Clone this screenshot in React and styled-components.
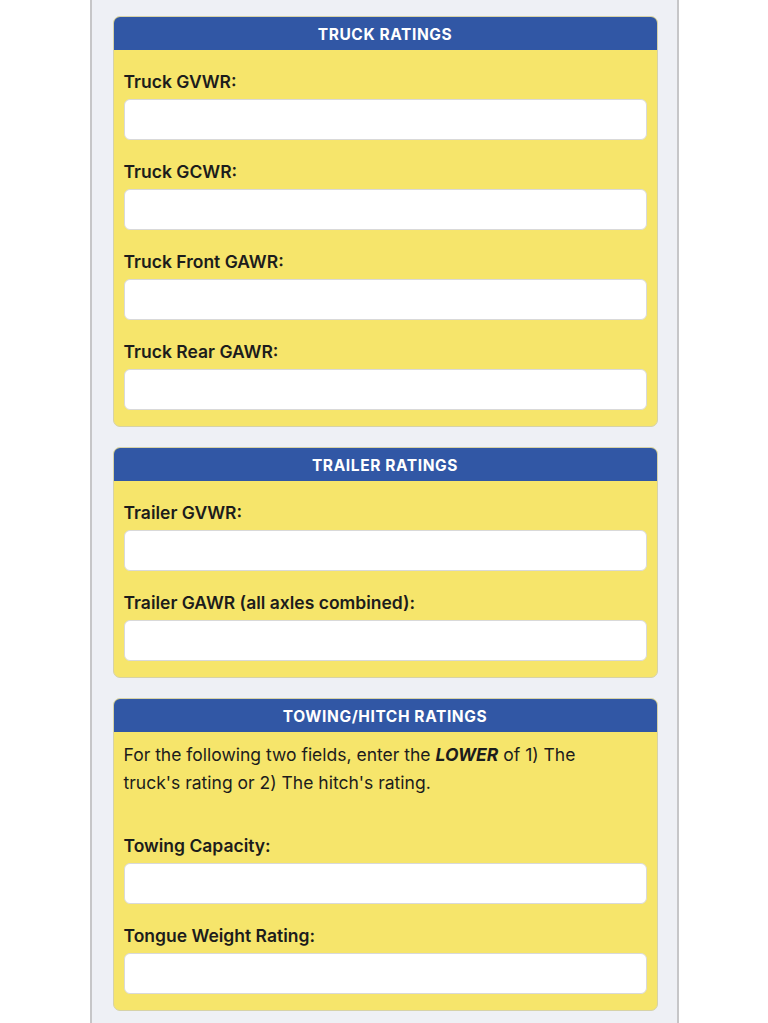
import React from 'react';
import styled, { createGlobalStyle } from 'styled-components';

const GlobalStyle = createGlobalStyle`
  html, body {
    margin: 0;
    padding: 0;
    background: #ffffff;
  }
  body {
    font-family: Inter, "Liberation Sans", Arial, sans-serif;
    color: #1c1c1c;
  }
`;

const sections = [
  {
    title: 'Truck Ratings',
    fields: ['Truck GVWR:', 'Truck GCWR:', 'Truck Front GAWR:', 'Truck Rear GAWR:'],
  },
  {
    title: 'Trailer Ratings',
    fields: ['Trailer GVWR:', 'Trailer GAWR (all axles combined):'],
  },
  {
    title: 'Towing/Hitch Ratings',
    intro: true,
    fields: ['Towing Capacity:', 'Tongue Weight Rating:'],
  },
];

function App() {
  return (
    <>
      <GlobalStyle />
      <StyledPanel>
        {sections.map((section) => (
          <StyledCard key={section.title}>
            <StyledCardHeader>{section.title}</StyledCardHeader>
            <StyledCardBody $tight={section.intro}>
              {section.intro && (
                <StyledIntro>
                  For the following two fields, enter the <em>LOWER</em> of 1) The
                  truck's rating or 2) The hitch's rating.
                </StyledIntro>
              )}
              {section.fields.map((label) => (
                <StyledField key={label}>
                  <StyledLabel>{label}</StyledLabel>
                  <StyledInput type="text" />
                </StyledField>
              ))}
            </StyledCardBody>
          </StyledCard>
        ))}
      </StyledPanel>
    </>
  );
}

const StyledPanel = styled.div`
  box-sizing: border-box;
  width: 589px;
  min-height: 1023px;
  margin: 0 auto;
  padding: 16px 19px 20px 21px;
  background: #eef0f5;
  border-left: 2px solid #c6c6c8;
  border-right: 2px solid #c6c6c8;
  display: flex;
  flex-direction: column;
  gap: 20px;
`;

const StyledCard = styled.div`
  background: #f6e56b;
  border: 1px solid #d6d2a8;
  border-radius: 7px;
  overflow: hidden;
`;

const StyledCardHeader = styled.div`
  height: 33px;
  padding-top: 2px;
  box-sizing: border-box;
  background: #3157a5;
  color: #ffffff;
  font-size: 15.5px;
  font-weight: 700;
  text-transform: uppercase;
  display: flex;
  align-items: center;
  justify-content: center;
  letter-spacing: 0.6px;
`;

const StyledCardBody = styled.div`
  padding: ${(p) => (p.$tight ? '9px' : '20px')} 10px 16px;
  display: flex;
  flex-direction: column;
`;

const StyledIntro = styled.p`
  margin: 0 0 37px;
  padding-right: 40px;
  font-size: 17.5px;
  line-height: 28px;
  em {
    font-weight: 700;
  }
`;

const StyledField = styled.div`
  display: flex;
  flex-direction: column;
  gap: 5px;
  margin-bottom: 20px;
  &:last-child {
    margin-bottom: 0;
  }
`;

const StyledLabel = styled.label`
  font-size: 17.5px;
  font-weight: 600;
  line-height: 24px;
`;

const StyledInput = styled.input`
  box-sizing: border-box;
  height: 41px;
  width: 100%;
  border: 1px solid #d9d9d9;
  border-radius: 6px;
  background: #ffffff;
  padding: 0 10px;
  font-size: 17px;
  outline: none;
`;

export default App;
